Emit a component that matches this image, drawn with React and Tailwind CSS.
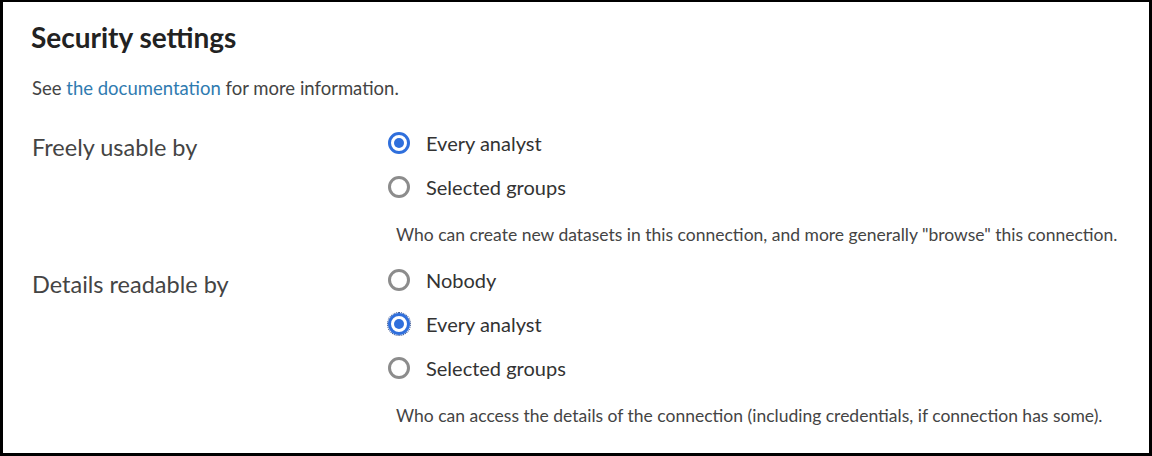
function Radio({ checked, focused }) {
    return (
        <span
            className={
                'relative flex h-[22px] w-[22px] shrink-0 items-center justify-center rounded-full border-[3px] bg-white ' +
                (checked ? 'border-[#2f6fdc]' : 'border-[#8c8c8c]')
            }
        >
            {checked && <span className="h-[10px] w-[10px] rounded-full bg-[#2f6fdc]" />}
            {focused && (
                <span className="absolute -inset-[4px] rounded-full border border-dotted border-[#1d3f86]" />
            )}
        </span>
    );
}

function Option({ label, checked, focused }) {
    return (
        <label className="flex h-[44px] items-center gap-[16px] pl-[385px]">
            <Radio checked={checked} focused={focused} />
            <span className="text-[20px] leading-[26px] text-[#333]">{label}</span>
        </label>
    );
}

function Setting({ title, options, help }) {
    return (
        <div className="relative">
            <div className="absolute left-[29px] top-[11px] text-[23.5px] leading-[30px] text-[#444]">{title}</div>
            {options.map((o) => (
                <Option key={o.label} label={o.label} checked={o.checked} focused={o.focused} />
            ))}
            <p className="pl-[393px] pt-[15px] pb-[12px] text-[17.5px] leading-[22px] text-[#444]">{help}</p>
        </div>
    );
}

export default function App() {
    return (
        <div
            className="h-[456px] w-[1152px] overflow-hidden border-x-[3px] border-t-[2px] border-b-[3px] border-black bg-white"
            style={{ fontFamily: 'Lato, "Open Sans", sans-serif' }}
        >
            <h1 className="pl-[28px] pt-[19px] text-[28px] leading-[32px] font-bold text-[#222]">Security settings</h1>
            <p className="pl-[29px] pt-[23px] text-[18.5px] leading-[24px] text-[#444]">
                See <a className="text-[#2f7bb0]">the documentation</a> for more information.
            </p>
            <div className="pt-[21px]">
                <Setting
                    title="Freely usable by"
                    options={[
                        { label: 'Every analyst', checked: true },
                        { label: 'Selected groups' },
                    ]}
                    help={'Who can create new datasets in this connection, and more generally "browse" this connection.'}
                />
                <Setting
                    title="Details readable by"
                    options={[
                        { label: 'Nobody' },
                        { label: 'Every analyst', checked: true, focused: true },
                        { label: 'Selected groups' },
                    ]}
                    help="Who can access the details of the connection (including credentials, if connection has some)."
                />
            </div>
        </div>
    );
}
